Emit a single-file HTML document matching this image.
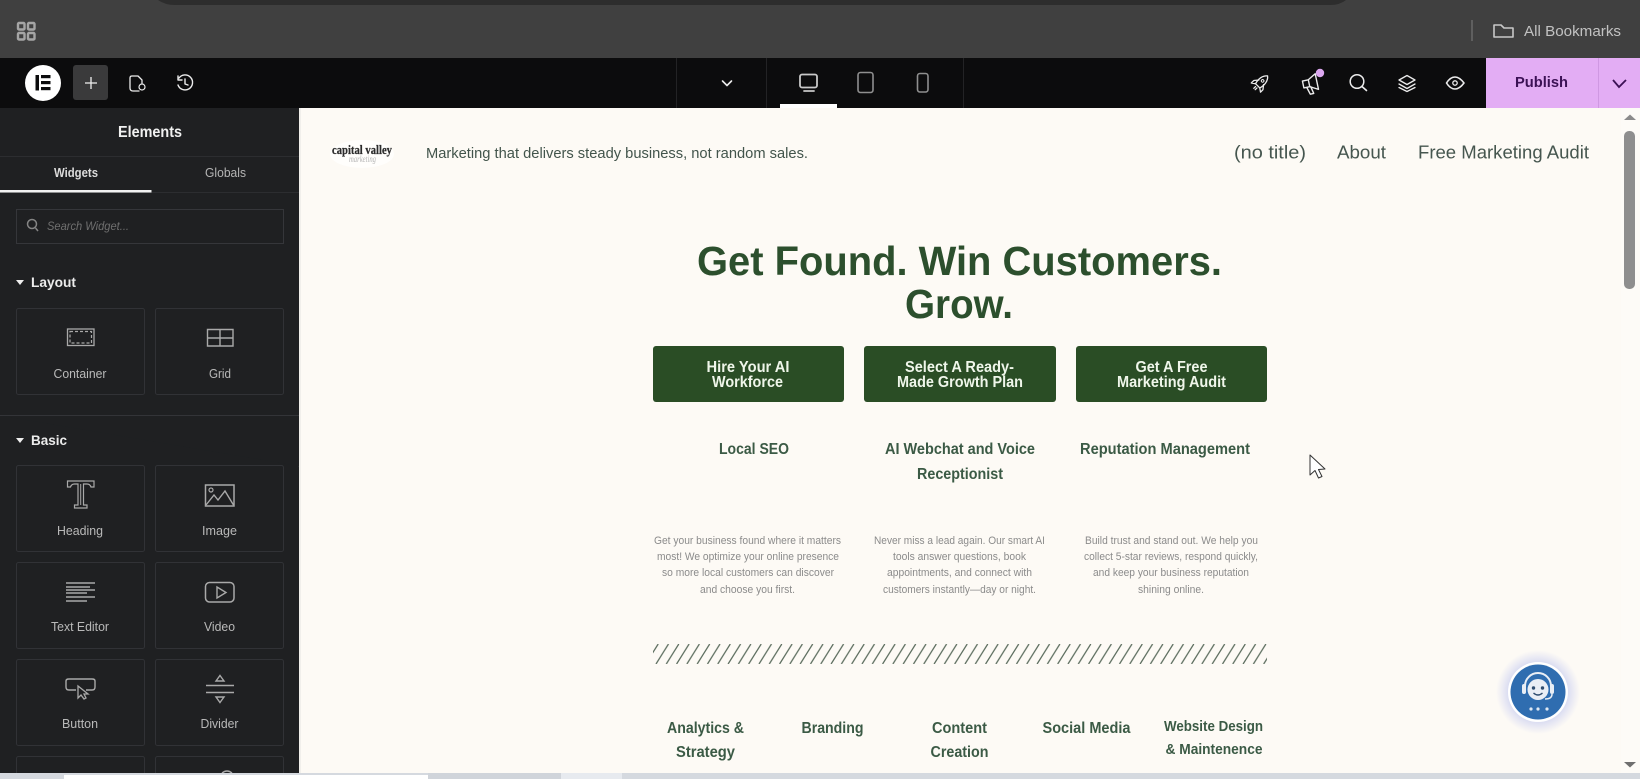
<!DOCTYPE html>
<html lang="en"><head><meta charset="utf-8"><title>Elementor Editor</title>
<style>
html,body{margin:0;padding:0;width:1640px;height:779px;overflow:hidden;background:#fdfaf5}
svg{display:block}
text{font-family:"Liberation Sans",Arial,sans-serif}
.b{font-weight:700}
.lab{font-size:12.5px;fill:#b9b9b9;text-anchor:middle}
.fh{font-size:15.5px;font-weight:700;fill:#3b5a45}
.p{font-size:10.8px;fill:#8b8b8b}
.btn{font-size:15.5px;font-weight:700;fill:#eff6ea}
.nav{font-size:18px;fill:#46564f}
.i{fill:none;stroke:#c8c8c8;stroke-width:1.5;stroke-linecap:round;stroke-linejoin:round}
.w{fill:none;stroke:#ececec;stroke-width:1.6;stroke-linecap:round;stroke-linejoin:round}
.card{fill:#1f2022;stroke:#313236;stroke-width:1}
</style></head><body>
<svg xmlns="http://www.w3.org/2000/svg" width="1640" height="779" viewBox="0 0 1640 779">
<defs>
<pattern id="h" width="10.3" height="20" patternUnits="userSpaceOnUse" x="653" y="644"><path d="M3 20L15.500 0M-7.300 20L5.200 0" stroke="#5d6e5f" stroke-width="1.300" fill="none"/></pattern>
<radialGradient id="glow"><stop offset="60%" stop-color="#5a6fe0" stop-opacity=".3"/><stop offset="100%" stop-color="#6a7ff0" stop-opacity="0"/></radialGradient>
</defs>
<!-- browser bar -->
<rect width="1640" height="58" fill="#404040"/>
<path d="M158 0H1346Q1340 5 1330 5H175Q165 5 158 0Z" fill="#2d2d2d"/>
<g fill="none" stroke="#a5a5a5" stroke-width="2.400"><rect x="18" y="23" width="6.500" height="6.500" rx="1"/><rect x="28" y="23" width="6.500" height="6.500" rx="1"/><rect x="18" y="33" width="6.500" height="6.500" rx="1"/><rect x="28" y="33" width="6.500" height="6.500" rx="1"/></g>
<rect x="1471" y="20" width="2" height="21" fill="#5f5f5f"/>
<path d="M1494 37V25H1501L1504 28H1513V37Z" fill="none" stroke="#c8c8c8" stroke-width="1.600" stroke-linejoin="round"/>
<text x="1524" y="36" font-size="15" fill="#c2c2c2" textLength="97" lengthAdjust="spacingAndGlyphs">All Bookmarks</text>

<!-- top bar -->
<rect y="58" width="1640" height="50" fill="#0c0c0d"/>
<circle cx="43" cy="83" r="18" fill="#fff"/>
<g fill="#0c0c0d"><rect x="35.500" y="75" width="3.500" height="15.500"/><rect x="41" y="75" width="9.500" height="3.200"/><rect x="41" y="81" width="9.500" height="3.200"/><rect x="41" y="87" width="9.500" height="3.200"/></g>
<rect x="73" y="65" width="35" height="35" rx="3" fill="#3a3a3b"/>
<path d="M91 77V89M85 83H97" stroke="#f0f0f0" stroke-width="1.300"/>
<path d="M139 91H133Q130 91 130 88V78Q130 76 132 76H138L142 80V83" class="w" style="stroke-width:1.300"/>
<circle cx="142" cy="87" r="3" class="w" style="stroke-width:1.200"/>
<path d="M179 78A7.500 7.500 0 1 1 178 85M178 76V80H182M185 79V84L188 85" class="w" style="stroke-width:1.400"/>
<g stroke="#232325"><path d="M676.500 58V108M766.500 58V108M963.500 58V108"/></g>
<path d="M722.500 81L727 85.500L731.500 81" class="w"/>
<rect x="800" y="74.500" width="17" height="13" rx="2" class="i" style="stroke-width:1.800"/><path d="M804 91H814" class="i" style="stroke-width:1.800"/>
<rect x="858" y="72.500" width="15" height="20" rx="2.500" fill="none" stroke="#8f8f8f" stroke-width="1.600"/>
<rect x="917.500" y="73.500" width="10.500" height="18.500" rx="2.500" fill="none" stroke="#8f8f8f" stroke-width="1.600"/>
<rect x="780" y="104" width="57" height="4" fill="#fff"/>
<!-- right icons -->
<g transform="translate(1260.500 83) rotate(45)" class="w" style="stroke-width:1.300">
<path d="M0 -10C4 -7 4.500 -1 3 4H-3C-4.500 -1 -4 -7 0 -10Z" fill="#0c0c0d"/>
<path d="M-3.300 -1L-6.500 3V6.500L-3 4M3.300 -1L6.500 3V6.500L3 4M-1 6V8.500M1 6V8.500"/>
<circle cx="0" cy="-3" r="1.300" style="stroke-width:1"/>
</g>
<g transform="rotate(-12 1310 83)" class="w" style="stroke-width:1.400">
<path d="M1303 79.500H1309L1317 75V91L1309 86.500H1303Z"/>
<path d="M1306 87L1308 94H1311.500L1310 87M1309 80V86"/>
</g>
<circle cx="1320" cy="73" r="4.200" fill="#dca7f0"/>
<circle cx="1357" cy="81.500" r="6.800" class="w" style="stroke-width:1.500"/><path d="M1362 86.500L1366.500 90.500" class="w"/>
<path d="M1407 75.500L1415 80L1407 84.500L1399 80ZM1399 84L1407 88.500L1415 84M1399 87.500L1407 91.500L1415 87.500" class="w" style="stroke-width:1.300"/>
<path d="M1446.500 83C1449 79 1452 77 1455 77C1458 77 1461 79 1464 83C1461 87 1458 89 1455 89C1452 89 1449 87 1446.500 83Z" class="w"/><circle cx="1455" cy="83" r="2.200" class="w" style="stroke-width:1.300"/>
<rect x="1486" y="58" width="154" height="50" fill="#e3adf4"/>
<rect x="1598" y="58" width="1" height="50" fill="#cf98e2"/>
<text x="1515" y="87" class="b" font-size="15" fill="#3c1155" textLength="53" lengthAdjust="spacingAndGlyphs">Publish</text>
<path d="M1613 80L1619 87L1626 80" fill="none" stroke="#3c1155" stroke-width="1.800"/>

<!-- panel -->
<rect y="108" width="299" height="665" fill="#1f2022"/>
<text x="150" y="137" class="b" font-size="15.500" fill="#f1f1f1" text-anchor="middle" textLength="64" lengthAdjust="spacingAndGlyphs">Elements</text>
<path d="M0 156.500H299M0 192.500H299" stroke="#2c2d30"/>
<text x="54" y="177" font-size="12.500" font-weight="700" fill="#dcdcdc" textLength="44" lengthAdjust="spacingAndGlyphs">Widgets</text>
<text x="205" y="177" font-size="12.500" fill="#b5b5b5" textLength="41" lengthAdjust="spacingAndGlyphs">Globals</text>
<rect y="190" width="151.500" height="2.500" fill="#f2f2f2"/>
<rect x="16.500" y="209.500" width="267" height="34" fill="none" stroke="#35363a"/>
<circle cx="32" cy="224" r="4.500" fill="none" stroke="#858585" stroke-width="1.500"/><path d="M35.500 228L38 231" stroke="#858585" stroke-width="1.500"/>
<text x="47" y="230" font-size="12" font-style="italic" fill="#6f6f6f" textLength="82" lengthAdjust="spacingAndGlyphs">Search Widget...</text>

<path d="M16 280H24L20 285Z" fill="#eee"/>
<text x="31" y="287" class="b" font-size="14" fill="#ececec" textLength="45" lengthAdjust="spacingAndGlyphs">Layout</text>
<rect class="card" x="16.500" y="308.500" width="128" height="86" rx="2"/>
<rect class="card" x="155.500" y="308.500" width="128" height="86" rx="2"/>
<rect x="67.500" y="329" width="26.500" height="16.500" fill="none" stroke="#a9a9a9" stroke-width="1.300"/>
<rect x="70" y="331.500" width="21.500" height="11.500" fill="none" stroke="#a9a9a9" stroke-width="1.200" stroke-dasharray="3 2"/>
<path d="M207.500 329.500H233V346H207.500ZM207.500 338H233M220 329.500V346" fill="none" stroke="#a9a9a9" stroke-width="1.400"/>
<text x="80" y="378" class="lab" textLength="53" lengthAdjust="spacingAndGlyphs">Container</text>
<text x="220" y="378" class="lab" textLength="22" lengthAdjust="spacingAndGlyphs">Grid</text>

<!-- handle -->
<path d="M0 415.500H314.500V466.500H299V466" fill="#1f2022" stroke="#333438"/>
<rect x="290" y="416" width="24" height="50" fill="#1f2022"/>
<path d="M309 437L305.500 440.500L309 444" fill="none" stroke="#d5d5d5" stroke-width="1.500"/>
<path d="M16 438H24L20 443Z" fill="#eee"/>
<text x="31" y="445" class="b" font-size="14" fill="#ececec" textLength="36" lengthAdjust="spacingAndGlyphs">Basic</text>

<rect class="card" x="16.500" y="465.500" width="128" height="86" rx="2"/>
<rect class="card" x="155.500" y="465.500" width="128" height="86" rx="2"/>
<rect class="card" x="16.500" y="562.500" width="128" height="86" rx="2"/>
<rect class="card" x="155.500" y="562.500" width="128" height="86" rx="2"/>
<rect class="card" x="16.500" y="659.500" width="128" height="86" rx="2"/>
<rect class="card" x="155.500" y="659.500" width="128" height="86" rx="2"/>
<rect class="card" x="16.500" y="756.500" width="128" height="30" rx="2"/>
<rect class="card" x="155.500" y="756.500" width="128" height="30" rx="2"/>

<path d="M67.500 487V481H94V487H91Q90 484 87 484H83.500V505H87V508H74.500V505H78V484H74.500Q71.500 484 70.500 487Z" fill="none" stroke="#a9a9a9" stroke-width="1.200"/>
<path d="M80.700 484V505" stroke="#a9a9a9" stroke-width="1"/>
<rect x="205.500" y="485" width="28.500" height="21" fill="none" stroke="#a9a9a9" stroke-width="1.500"/>
<circle cx="211" cy="490" r="2" fill="none" stroke="#a9a9a9" stroke-width="1.200"/>
<path d="M206 505L214 495L218 500L225 491L233.500 505" fill="none" stroke="#a9a9a9" stroke-width="1.400"/>
<text x="80" y="535" class="lab" textLength="46" lengthAdjust="spacingAndGlyphs">Heading</text>
<text x="219.500" y="535" class="lab" textLength="35" lengthAdjust="spacingAndGlyphs">Image</text>

<path d="M66 583H95M66 587H90M66 590H95M66 593H87M66 597H95M66 601H87" stroke="#a9a9a9" stroke-width="1.400" fill="none"/>
<rect x="205.500" y="582.500" width="28.500" height="19.500" rx="4" fill="none" stroke="#a9a9a9" stroke-width="1.500"/>
<path d="M217 587L226 592.500L217 598Z" fill="none" stroke="#a9a9a9" stroke-width="1.400"/>
<text x="80" y="631" class="lab" textLength="58" lengthAdjust="spacingAndGlyphs">Text Editor</text>
<text x="219.500" y="631" class="lab" textLength="31" lengthAdjust="spacingAndGlyphs">Video</text>

<path d="M76 690H69Q66 690 66 687V681Q66 679 69 679H92Q95 679 95 681V687Q95 690 92 690H86" fill="none" stroke="#a9a9a9" stroke-width="1.400"/>
<path d="M78 686L78 698L81 695L84 699L86 698L84 694L88 694Z" fill="#1f2022" stroke="#a9a9a9" stroke-width="1.300"/>
<path d="M206 685.500H234M206 692.500H234" stroke="#a9a9a9" stroke-width="1.400"/>
<path d="M220 675.500L224 681H216ZM220 702.500L224 697H216Z" fill="none" stroke="#a9a9a9" stroke-width="1.400"/>
<text x="80" y="728" class="lab" textLength="36" lengthAdjust="spacingAndGlyphs">Button</text>
<text x="219.500" y="728" class="lab" textLength="38" lengthAdjust="spacingAndGlyphs">Divider</text>
<path d="M222 773Q227 769 232 773" fill="none" stroke="#a9a9a9" stroke-width="1.400"/>

<!-- canvas -->
<rect x="299" y="108" width="1341" height="665" fill="#fdfaf5"/>
<rect x="1621" y="108" width="19" height="665" fill="#fdfbf7"/>
<rect x="299" y="108" width="2" height="665" fill="#f1efeb"/>
<rect x="0" y="773" width="1640" height="6" fill="#d5d9df"/>
<rect x="64" y="775" width="365" height="4" fill="#fff"/>
<rect x="561" y="773" width="61" height="6" fill="#e7eaef"/>
<rect x="428" y="773" width="133" height="6" fill="#d0d4da"/>

<path d="M1630 114.500L1636 120H1624Z" fill="#8b8b8b"/>
<rect x="1624" y="131" width="11" height="158" rx="5" fill="#8e8e8e"/>
<path d="M1630 767.500L1636 762H1624Z" fill="#6f6f6f"/>

<!-- site header -->
<ellipse cx="362" cy="154" rx="32" ry="14" fill="#fff" opacity=".7"/>
<text x="332" y="154" font-size="12.500" font-weight="700" fill="#2c2c2c" stroke="#2c2c2c" stroke-width=".25" style="font-family:'Liberation Serif',serif" textLength="60" lengthAdjust="spacingAndGlyphs">capital valley</text>
<text x="349" y="162" font-size="9" font-style="italic" fill="#b5b5b5" style="font-family:'Liberation Serif',serif" textLength="27" lengthAdjust="spacingAndGlyphs">marketing</text>
<text x="426" y="158" font-size="15" fill="#42544b" textLength="382" lengthAdjust="spacingAndGlyphs">Marketing that delivers steady business, not random sales.</text>
<text x="1234" y="158.500" class="nav" textLength="72" lengthAdjust="spacingAndGlyphs">(no title)</text>
<text x="1337" y="158.500" class="nav" textLength="49" lengthAdjust="spacingAndGlyphs">About</text>
<text x="1418" y="158.500" class="nav" textLength="171" lengthAdjust="spacingAndGlyphs">Free Marketing Audit</text>

<!-- hero -->
<text x="697" y="275" font-size="41" font-weight="700" fill="#2c4f2d" textLength="525" lengthAdjust="spacingAndGlyphs">Get Found. Win Customers.</text>
<text x="905" y="318" font-size="41" font-weight="700" fill="#2c4f2d" textLength="108" lengthAdjust="spacingAndGlyphs">Grow.</text>

<g fill="#2a4d25"><rect x="653" y="346" width="191" height="56" rx="3"/><rect x="864" y="346" width="192" height="56" rx="3"/><rect x="1076" y="346" width="191" height="56" rx="3"/></g>
<text x="706.500" y="372" class="btn" textLength="83" lengthAdjust="spacingAndGlyphs">Hire Your AI</text>
<text x="712" y="387" class="btn" textLength="71" lengthAdjust="spacingAndGlyphs">Workforce</text>
<text x="905" y="372" class="btn" textLength="109" lengthAdjust="spacingAndGlyphs">Select A Ready-</text>
<text x="897" y="387" class="btn" textLength="126" lengthAdjust="spacingAndGlyphs">Made Growth Plan</text>
<text x="1135.500" y="372" class="btn" textLength="72" lengthAdjust="spacingAndGlyphs">Get A Free</text>
<text x="1117" y="387" class="btn" textLength="109" lengthAdjust="spacingAndGlyphs">Marketing Audit</text>

<text x="719" y="454" class="fh" textLength="70" lengthAdjust="spacingAndGlyphs">Local SEO</text>
<text x="885" y="454" class="fh" textLength="150" lengthAdjust="spacingAndGlyphs">AI Webchat and Voice</text>
<text x="917" y="479" class="fh" textLength="86" lengthAdjust="spacingAndGlyphs">Receptionist</text>
<text x="1080" y="454" class="fh" textLength="170" lengthAdjust="spacingAndGlyphs">Reputation Management</text>

<text x="654" y="544" class="p" textLength="187" lengthAdjust="spacingAndGlyphs">Get your business found where it matters</text>
<text x="657" y="560" class="p" textLength="182" lengthAdjust="spacingAndGlyphs">most! We optimize your online presence</text>
<text x="662" y="576" class="p" textLength="172" lengthAdjust="spacingAndGlyphs">so more local customers can discover</text>
<text x="700" y="593" class="p" textLength="95" lengthAdjust="spacingAndGlyphs">and choose you first.</text>
<text x="874" y="544" class="p" textLength="171" lengthAdjust="spacingAndGlyphs">Never miss a lead again. Our smart AI</text>
<text x="893" y="560" class="p" textLength="133" lengthAdjust="spacingAndGlyphs">tools answer questions, book</text>
<text x="887" y="576" class="p" textLength="145" lengthAdjust="spacingAndGlyphs">appointments, and connect with</text>
<text x="883" y="593" class="p" textLength="153" lengthAdjust="spacingAndGlyphs">customers instantly—day or night.</text>
<text x="1085" y="544" class="p" textLength="173" lengthAdjust="spacingAndGlyphs">Build trust and stand out. We help you</text>
<text x="1084" y="560" class="p" textLength="174" lengthAdjust="spacingAndGlyphs">collect 5-star reviews, respond quickly,</text>
<text x="1093" y="576" class="p" textLength="156" lengthAdjust="spacingAndGlyphs">and keep your business reputation</text>
<text x="1138" y="593" class="p" textLength="66" lengthAdjust="spacingAndGlyphs">shining online.</text>

<rect x="653" y="644" width="614" height="20" fill="url(#h)"/>

<text x="667" y="733" class="fh" textLength="77" lengthAdjust="spacingAndGlyphs">Analytics &amp;</text>
<text x="676" y="757" class="fh" textLength="59" lengthAdjust="spacingAndGlyphs">Strategy</text>
<text x="801.500" y="733" class="fh" textLength="62" lengthAdjust="spacingAndGlyphs">Branding</text>
<text x="932" y="733" class="fh" textLength="55" lengthAdjust="spacingAndGlyphs">Content</text>
<text x="930.500" y="757" class="fh" textLength="58" lengthAdjust="spacingAndGlyphs">Creation</text>
<text x="1042.500" y="733" class="fh" textLength="88" lengthAdjust="spacingAndGlyphs">Social Media</text>
<text x="1164" y="731" class="fh" style="font-size:14.500px" textLength="99" lengthAdjust="spacingAndGlyphs">Website Design</text>
<text x="1165.500" y="754" class="fh" style="font-size:14.500px" textLength="97" lengthAdjust="spacingAndGlyphs">&amp; Maintenence</text>

<!-- cursor -->
<path d="M1310 455V475L1315 470.500L1318.500 478L1322 476.500L1318.500 469.500L1325 469Z" fill="#fff" stroke="#333" stroke-width="1" stroke-linejoin="round"/>

<!-- chat bubble -->
<circle cx="1538" cy="692" r="42" fill="url(#glow)"/>
<circle cx="1538" cy="692" r="30" fill="#fff"/>
<circle cx="1538" cy="692" r="27.500" fill="#2f6db0"/>
<circle cx="1538" cy="689.500" r="10.500" fill="#e9eef5"/>
<path d="M1525 686A13 13 0 0 1 1551 686" fill="none" stroke="#e9eef5" stroke-width="2"/>
<rect x="1522" y="684" width="4" height="10" rx="2" fill="#e9eef5"/><rect x="1550" y="684" width="4" height="10" rx="2" fill="#e9eef5"/>
<path d="M1552 694Q1552 699 1545 699" fill="none" stroke="#e9eef5" stroke-width="1.500"/>
<circle cx="1533.500" cy="688" r="1.700" fill="#2f4d70"/><circle cx="1542.500" cy="688" r="1.700" fill="#2f4d70"/>
<path d="M1533.500 693Q1538 697 1542.500 693" fill="none" stroke="#2f4d70" stroke-width="1.400"/>
<g fill="#dfe8f3"><circle cx="1531" cy="709" r="1.600"/><circle cx="1538" cy="709" r="1.600"/><circle cx="1547" cy="709" r="1.600"/></g>
</svg>
</body></html>
